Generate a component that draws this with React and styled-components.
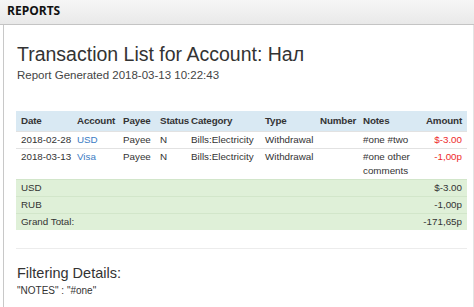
import React from 'react'
import styled, { createGlobalStyle } from 'styled-components'

const GlobalStyle = createGlobalStyle`
  html, body {
    margin: 0;
    padding: 0;
    background: #ffffff;
  }
  body {
    width: 474px;
    height: 307px;
    overflow: hidden;
    font-family: 'Liberation Sans', Arial, sans-serif;
  }
`

const Page = styled.div`
  display: flex;
  flex-direction: column;
  width: 474px;
  height: 307px;
`

const TopBar = styled.div`
  height: 24px;
  line-height: 21px;
  padding: 0 7px;
  background: linear-gradient(#f6f6f6, #e9e9e9);
  border-bottom: 1px solid #c4c4c4;
  font-family: 'Open Sans', sans-serif;
  font-weight: 700;
  font-size: 12px;
  color: #111;
`

const Panel = styled.div`
  flex: 1;
  margin-left: 3px;
  border-left: 1px solid #c8c8c8;
  border-right: 1px solid #e4e4e4;
  padding: 18px 5px 0 12px;
  color: #333;
`

const Title = styled.h1`
  margin: 0;
  padding-left: 1px;
  font-size: 19.5px;
  line-height: 22px;
  font-weight: 400;
  color: #333;
`

const Subtitle = styled.div`
  margin-top: 3px;
  padding-left: 1px;
  font-size: 11.5px;
  line-height: 14px;
  color: #444;
`

const Table = styled.table`
  margin-top: 29px;
  width: 451px;
  border-collapse: collapse;
  table-layout: fixed;
  font-size: 9.8px;
  line-height: 14px;
`

const HeadRow = styled.tr`
  background: #d9e9f3;
`

const Th = styled.th`
  padding: 3px ${({ right }) => (right ? '5px' : '0')} 3px 5px;
  text-align: ${({ right }) => (right ? 'right' : 'left')};
  font-weight: 700;
  letter-spacing: -0.15px;
  color: #333;
  white-space: nowrap;
`

const Row = styled.tr`
  background: ${({ total }) => (total ? '#dff0d8' : 'transparent')};
  border-top: 1px solid ${({ total }) => (total ? '#d2e6ca' : '#e2e2e2')};
`

const Td = styled.td`
  padding: 1px ${({ right }) => (right ? '5px' : '0')} 1px 5px;
  text-align: ${({ right }) => (right ? 'right' : 'left')};
  vertical-align: top;
  color: ${({ tone }) => (tone === 'red' ? '#ee2a2a' : tone === 'link' ? '#3b7cc4' : '#333')};
`

const Divider = styled.div`
  margin-top: 18px;
  width: 451px;
  height: 1px;
  background: #ececec;
`

const SectionTitle = styled.h2`
  margin: 16px 0 0;
  padding-left: 1px;
  font-size: 14.5px;
  line-height: 17px;
  font-weight: 400;
  color: #333;
`

const FilterLine = styled.div`
  margin-top: 2px;
  padding-left: 1px;
  font-size: 10px;
  line-height: 13px;
  color: #333;
`

const columns = [
  { label: 'Date', width: 56 },
  { label: 'Account', width: 46 },
  { label: 'Payee', width: 37 },
  { label: 'Status', width: 31 },
  { label: 'Category', width: 74 },
  { label: 'Type', width: 55 },
  { label: 'Number', width: 43 },
  { label: 'Notes', width: 56 },
  { label: 'Amount', width: 53, right: true },
]

const transactions = [
  {
    date: '2018-02-28', account: 'USD', payee: 'Payee', status: 'N',
    category: 'Bills:Electricity', type: 'Withdrawal', number: '',
    notes: '#one #two', amount: '$-3.00',
  },
  {
    date: '2018-03-13', account: 'Visa', payee: 'Payee', status: 'N',
    category: 'Bills:Electricity', type: 'Withdrawal', number: '',
    notes: '#one other comments', amount: '-1,00р',
  },
]

const totals = [
  { label: 'USD', amount: '$-3.00' },
  { label: 'RUB', amount: '-1,00р' },
  { label: 'Grand Total:', amount: '-171,65р' },
]

export default function App() {
  return (
    <Page>
      <GlobalStyle />
      <TopBar>REPORTS</TopBar>
      <Panel>
        <Title>Transaction List for Account: Нал</Title>
        <Subtitle>Report Generated 2018-03-13 10:22:43</Subtitle>

        <Table>
          <colgroup>
            {columns.map((c) => (
              <col key={c.label} style={{ width: c.width }} />
            ))}
          </colgroup>
          <thead>
            <HeadRow>
              {columns.map((c) => (
                <Th key={c.label} right={c.right}>{c.label}</Th>
              ))}
            </HeadRow>
          </thead>
          <tbody>
            {transactions.map((t) => (
              <Row key={t.date}>
                <Td>{t.date}</Td>
                <Td tone="link">{t.account}</Td>
                <Td>{t.payee}</Td>
                <Td>{t.status}</Td>
                <Td>{t.category}</Td>
                <Td>{t.type}</Td>
                <Td>{t.number}</Td>
                <Td>{t.notes}</Td>
                <Td right tone="red">{t.amount}</Td>
              </Row>
            ))}
            {totals.map((t) => (
              <Row key={t.label} total>
                <Td colSpan={8}>{t.label}</Td>
                <Td right>{t.amount}</Td>
              </Row>
            ))}
          </tbody>
        </Table>

        <Divider />
        <SectionTitle>Filtering Details:</SectionTitle>
        <FilterLine>"NOTES" : "#one"</FilterLine>
      </Panel>
    </Page>
  )
}
